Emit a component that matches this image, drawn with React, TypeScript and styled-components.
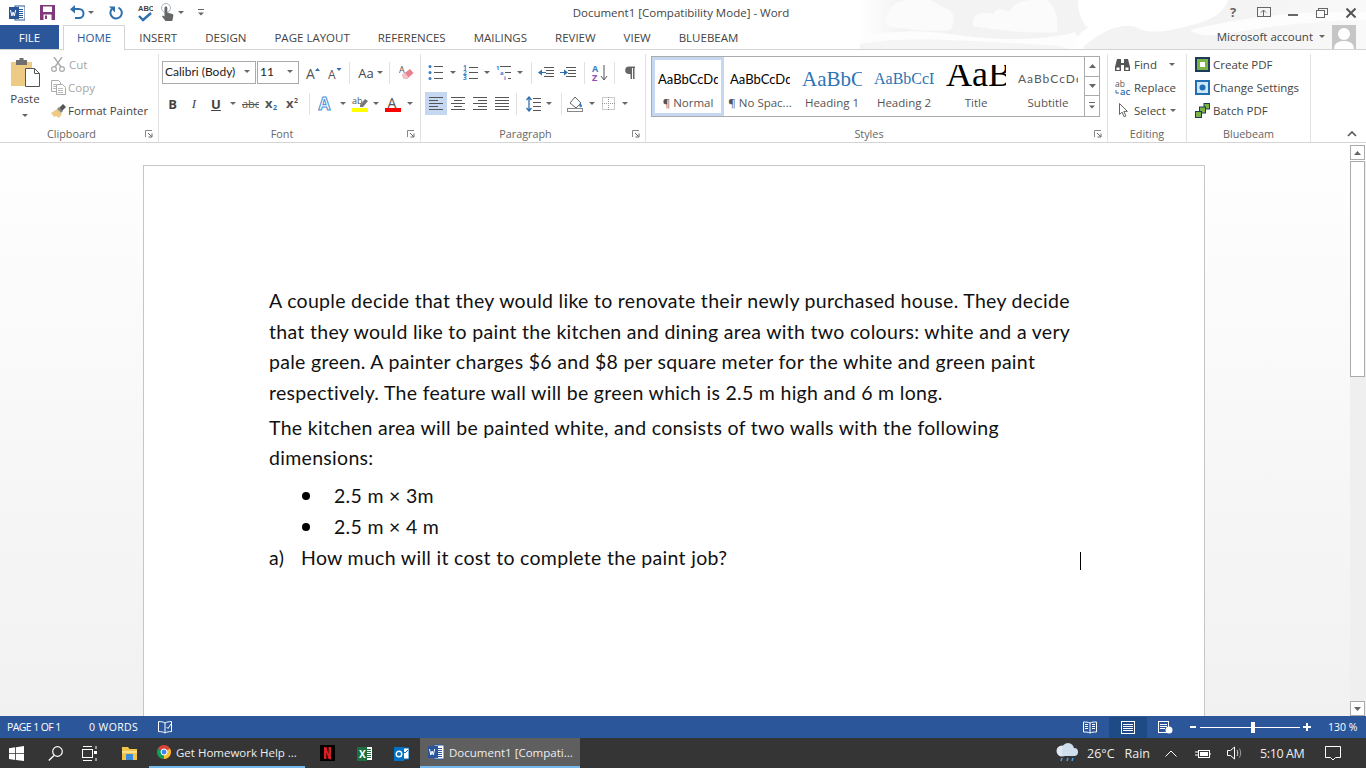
import React from "react";
import styled, { createGlobalStyle } from "styled-components";

const ui = `"Open Sans", "Noto Sans", sans-serif`;

const Global = createGlobalStyle`
  html, body { margin: 0; padding: 0; height: 100%; overflow: hidden; background: #fff; }
  * { box-sizing: border-box; }
`;

const Shell = styled.div`
  width: 1366px;
  height: 768px;
  display: flex;
  flex-direction: column;
  overflow: hidden;
  font-family: ${ui};
  color: #444;
`;

/* ---------- title bar + tabs ---------- */

const Header = styled.header`
  position: relative;
  height: 50px;
  background: #fff;
`;

const Watermark = styled.svg`
  position: absolute;
  right: 0;
  top: 0;
`;

const TitleRow = styled.div`
  position: relative;
  height: 25px;
  display: grid;
  grid-template-columns: 1fr auto 1fr;
  align-items: center;
`;

const Qat = styled.div`
  display: flex;
  align-items: center;
  padding-left: 9px;
  height: 25px;
`;

const QatSlot = styled.div<{ $w: number }>`
  width: ${(p) => p.$w}px;
  display: flex;
  align-items: center;
  justify-content: center;
`;

const DocTitle = styled.div`
  font-size: 11.5px;
  color: #444;
  padding-right: 4px;
`;

const WindowButtons = styled.div`
  display: flex;
  justify-content: flex-end;
  align-items: center;
  padding-right: 1px;
`;

const TabRow = styled.nav`
  position: relative;
  height: 25px;
  display: flex;
  align-items: stretch;
  border-bottom: 1px solid #d4d4d4;
`;

const FileTab = styled.div`
  width: 59px;
  background: #2b579a;
  color: #fff;
  font-size: 11.5px;
  display: flex;
  align-items: center;
  justify-content: center;
  margin-right: 4px;
`;

const Tab = styled.div<{ $active?: boolean }>`
  padding: 0 13px;
  font-size: 11.5px;
  line-height: 23px;
  color: ${(p) => (p.$active ? "#2b579a" : "#444")};
  white-space: nowrap;
  height: ${(p) => (p.$active ? "25px" : "24px")};
  border: 1px solid ${(p) => (p.$active ? "#d4d4d4" : "transparent")};
  border-bottom: none;
  background: ${(p) => (p.$active ? "#fff" : "transparent")};
`;

const Account = styled.div`
  margin-left: auto;
  display: flex;
  align-items: center;
  gap: 6px;
  font-size: 11.5px;
  color: #444;
  padding-bottom: 2px;
`;

const Avatar = styled.div`
  width: 24px;
  height: 24px;
  background: #c6c6c6;
  margin: 0 10px 0 1px;
  align-self: flex-end;
  position: relative;
  top: 2px;
  overflow: hidden;
`;

/* ---------- ribbon ---------- */

const Ribbon = styled.section`
  height: 93px;
  display: flex;
  background: #fff;
  border-bottom: 1px solid #d4d4d4;
  position: relative;
`;

const Group = styled.div<{ $w: number }>`
  width: ${(p) => p.$w}px;
  height: 88px;
  margin-top: 4px;
  display: flex;
  flex-direction: column;
  border-right: 1px solid #e1e1e1;
`;

const GroupBody = styled.div`
  flex: 1;
  min-height: 0;
  display: flex;
`;

const GroupLabel = styled.div<{ $launch?: boolean }>`
  height: 15px;
  position: relative;
  top: -1px;
  font-size: 10.8px;
  line-height: 15px;
  text-align: center;
  color: #666;
  padding-right: ${(p) => (p.$launch ? 15 : 0)}px;
`;

const Launcher = styled.svg`
  position: absolute;
  right: 5px;
  top: 4px;
`;

const Rows = styled.div<{ $pl: number }>`
  display: flex;
  flex-direction: column;
  gap: 8px;
  padding-left: ${(p) => p.$pl}px;
  padding-top: 7px;
`;

const Row = styled.div`
  display: flex;
  align-items: center;
  height: 23px;
`;

const Tool = styled.div<{ $w: number; $on?: boolean; $ml?: number }>`
  width: ${(p) => p.$w}px;
  height: 23px;
  margin-left: ${(p) => p.$ml ?? 0}px;
  display: flex;
  align-items: center;
  justify-content: center;
  background: ${(p) => (p.$on ? "#c5d7f1" : "transparent")};
  font-size: 13px;
  color: #444;
  flex: none;
`;

const Caret = styled.span<{ $ml?: number }>`
  display: inline-block;
  width: 0;
  height: 0;
  margin-left: ${(p) => p.$ml ?? 0}px;
  border-left: 3px solid transparent;
  border-right: 3px solid transparent;
  border-top: 3px solid #666;
  flex: none;
`;

const VSep = styled.div<{ $ml: number; $mr: number }>`
  width: 1px;
  height: 22px;
  background: #e1e1e1;
  margin: 0 ${(p) => p.$mr}px 0 ${(p) => p.$ml}px;
  flex: none;
`;

const Combo = styled.div<{ $w: number }>`
  width: ${(p) => p.$w}px;
  height: 23px;
  border: 1px solid #ababab;
  display: flex;
  align-items: center;
  justify-content: space-between;
  padding: 0 5px 2px 2px;
  font-family: "Lato", sans-serif;
  font-size: 12px;
  color: #222;
  margin-right: 1px;
  flex: none;
`;

const PasteCol = styled.div`
  width: 50px;
  display: flex;
  flex-direction: column;
  align-items: center;
  padding-top: 4px;
  flex: none;
`;

const PasteText = styled.div`
  font-size: 11.5px;
  color: #444;
  line-height: 16px;
  margin-top: 2px;
  margin-bottom: 7px;
`;

const ActionList = styled.div<{ $pl: number }>`
  display: flex;
  flex-direction: column;
  margin-top: -1px;
  padding-left: ${(p) => p.$pl}px;
`;

const Action = styled.div<{ $muted?: boolean; $gap?: number }>`
  height: 23px;
  display: flex;
  align-items: center;
  gap: ${(p) => p.$gap ?? 4}px;
  font-size: 11.5px;
  color: ${(p) => (p.$muted ? "#a6a6a6" : "#444")};
  white-space: nowrap;
`;

const Gallery = styled.div`
  margin: 2px 0 0 5px;
  width: 449px;
  height: 61px;
  border: 1px solid #ababab;
  display: flex;
  flex: none;
`;

const StyleItem = styled.div<{ $on?: boolean }>`
  width: 72px;
  height: 59px;
  border: 3px solid ${(p) => (p.$on ? "#c5d7f1" : "transparent")};
  display: flex;
  flex-direction: column;
  align-items: center;
  overflow: hidden;
  flex: none;
`;

const Preview = styled.div<{ $font?: string; $size: number; $color?: string; $spacing?: number; $lh?: number }>`
  width: 60px;
  height: 28px;
  margin-top: 5px;
  overflow: hidden;
  text-align: left;
  white-space: nowrap;
  font-family: ${(p) => p.$font ?? `"Lato", sans-serif`};
  font-size: ${(p) => p.$size}px;
  letter-spacing: ${(p) => p.$spacing ?? 0}px;
  color: ${(p) => p.$color ?? "#000"};
  line-height: ${(p) => p.$lh ?? 28}px;
  flex: none;
`;

const StyleName = styled.div`
  font-size: 11.5px;
  color: #555;
  line-height: 20px;
  white-space: nowrap;
`;

const GalleryScroll = styled.div`
  margin-left: auto;
  width: 15px;
  display: flex;
  flex-direction: column;
  border-left: 1px solid #ababab;
`;

const GalleryBtn = styled.div`
  height: 20px;
  display: flex;
  align-items: center;
  justify-content: center;
  border-bottom: 1px solid #ababab;
  &:last-child { border-bottom: none; }
`;

const CollapseBtn = styled.svg`
  position: absolute;
  right: 9px;
  bottom: 5px;
`;

/* ---------- document ---------- */

const Workspace = styled.main`
  flex: 1;
  min-height: 0;
  display: flex;
  background: linear-gradient(180deg, #ffffff 0%, #fbfbfb 25%, #f1f1f1 100%);
`;

const Canvas = styled.div`
  flex: 1;
  min-width: 0;
  overflow: hidden;
  padding: 22px 0 0 143px;
`;

const Page = styled.article`
  width: 1062px;
  height: 700px;
  background: #fff;
  border: 1px solid #c6c6c6;
  padding: 120px 0 0 125px;
  font-family: "Lato", sans-serif;
  font-size: 19.5px;
  letter-spacing: 0.3px;
  color: #111;
`;

const Para = styled.div<{ $mb: number }>`
  margin-bottom: ${(p) => p.$mb}px;
`;

const Line = styled.div`
  height: 30.7px;
  line-height: 30.7px;
  white-space: nowrap;
`;

const BulletLine = styled(Line)`
  display: flex;
  padding-left: 33px;
`;

const Dot = styled.span`
  width: 8px;
  height: 8px;
  border-radius: 50%;
  background: #000;
  margin: 11px 24px 0 0;
  flex: none;
`;

const AnswerLine = styled(Line)`
  display: flex;
`;

const Letter = styled.span`
  width: 32px;
  flex: none;
`;

const TextCursor = styled.span`
  width: 1px;
  height: 18px;
  background: #000;
  margin: 9px 0 0 353px;
  flex: none;
`;

const ScrollBar = styled.aside`
  width: 16px;
  display: flex;
  flex-direction: column;
  background: linear-gradient(180deg, #fff 0, #fff 18px, #efefef 18px, #efefef 100%);
  padding-top: 2px;
`;

const ScrollBtn = styled.div`
  width: 15px;
  height: 15px;
  background: #fff;
  border: 1px solid #ababab;
  display: flex;
  align-items: center;
  justify-content: center;
  flex: none;
`;

const ScrollThumb = styled.div`
  width: 15px;
  height: 216px;
  margin-top: 1px;
  background: #fff;
  border: 1px solid #ababab;
  flex: none;
`;

const ScrollGap = styled.div`
  flex: 1;
`;

/* ---------- status bar ---------- */

const StatusBar = styled.footer`
  height: 22px;
  background: #2b579a;
  color: #fff;
  display: flex;
  align-items: center;
  font-size: 10.5px;
  flex: none;
`;

const StatusText = styled.span<{ $w: number; $ml?: number; $ls?: number }>`
  width: ${(p) => p.$w}px;
  margin-left: ${(p) => p.$ml ?? 0}px;
  letter-spacing: ${(p) => p.$ls ?? 0}px;
  white-space: nowrap;
  flex: none;
`;

const ViewBtn = styled.div<{ $on?: boolean; $w: number; $ml?: number }>`
  width: ${(p) => p.$w}px;
  margin-left: ${(p) => p.$ml ?? 0}px;
  height: 21px;
  background: ${(p) => (p.$on ? "#1e4a85" : "transparent")};
  display: flex;
  align-items: center;
  justify-content: center;
  flex: none;
`;

const ZoomMinus = styled.div`
  width: 6px;
  height: 2px;
  background: #fff;
  margin-left: 7px;
  flex: none;
`;

const ZoomTrack = styled.div`
  width: 100px;
  height: 1px;
  background: #fff;
  margin: 0 3px 0 4px;
  position: relative;
  flex: none;
`;

const ZoomThumb = styled.div`
  position: absolute;
  left: 51px;
  top: -5px;
  width: 4px;
  height: 11px;
  background: #fff;
`;

/* ---------- taskbar ---------- */

const Taskbar = styled.div`
  height: 30px;
  background: #353535;
  color: #eee;
  display: flex;
  align-items: stretch;
  font-size: 12.5px;
  flex: none;
`;

const TaskIcon = styled.div<{ $w: number; $ml?: number }>`
  width: ${(p) => p.$w}px;
  margin-left: ${(p) => p.$ml ?? 0}px;
  display: flex;
  align-items: center;
  justify-content: center;
  flex: none;
`;

const TaskApp = styled.div<{ $w: number; $on?: boolean; $ml?: number }>`
  width: ${(p) => p.$w}px;
  margin-left: ${(p) => p.$ml ?? 0}px;
  display: flex;
  align-items: center;
  gap: 5px;
  padding-left: 8px;
  font-size: 11.5px;
  background: ${(p) => (p.$on ? "#5f5f5f" : "transparent")};
  border-bottom: 2px solid #76b9ed;
  white-space: nowrap;
  flex: none;
`;

const TrayText = styled.span<{ $ml: number; $ls?: number }>`
  margin-left: ${(p) => p.$ml}px;
  letter-spacing: ${(p) => p.$ls ?? 0}px;
  align-self: center;
  white-space: nowrap;
  flex: none;
`;

const TrayIcon = styled.div<{ $ml: number }>`
  margin-left: ${(p) => p.$ml}px;
  display: flex;
  align-items: center;
  flex: none;
`;

/* ---------- icons ---------- */

const Glyph = ({ w, h, children }: { w: number; h: number; children: React.ReactNode }) => (
  <svg width={w} height={h} viewBox={`0 0 ${w} ${h}`} style={{ display: "block", flex: "none" }}>
    {children}
  </svg>
);

const Lines = ({ rows, color = "#555" }: { rows: [number, number, number][]; color?: string }) => (
  <>
    {rows.map(([x1, x2, y], i) => (
      <line key={i} x1={x1} x2={x2} y1={y + 0.5} y2={y + 0.5} stroke={color} strokeWidth="1" />
    ))}
  </>
);

const WordIcon = () => (
  <Glyph w={16} h={16}>
    <rect x="6" y="1" width="10" height="14" fill="#fff" stroke="#2b579a" />
    <Lines rows={[[9, 14, 4], [9, 14, 6], [9, 14, 8], [9, 14, 10], [9, 14, 12]]} color="#2b579a" />
    <rect x="0" y="2" width="10" height="12" fill="#2b579a" />
    <path d="M1.5 5l1.4 6 1.2-4 1.2 4 1.4-6" fill="none" stroke="#fff" strokeWidth="1" />
  </Glyph>
);

const SaveIcon = () => (
  <Glyph w={15} h={15}>
    <rect x="0" y="0" width="15" height="15" fill="#80397b" />
    <rect x="3" y="1.5" width="9" height="5.5" fill="#fff" />
    <rect x="3.5" y="9.5" width="8" height="5.5" fill="#fff" />
    <rect x="5" y="10.5" width="2" height="3.5" fill="#80397b" />
  </Glyph>
);

const UndoIcon = () => (
  <Glyph w={16} h={15}>
    <path d="M3 4h7a4.500 4.500 0 0 1 0 9H6" fill="none" stroke="#2f6fae" strokeWidth="2" />
    <path d="M6 0L1 4.200 6 8.500z" fill="#2f6fae" />
  </Glyph>
);

const RedoIcon = () => (
  <Glyph w={14} h={15}>
    <path d="M9.500 2.600A5.700 5.700 0 1 1 2.800 4" fill="none" stroke="#2f6fae" strokeWidth="2" />
    <path d="M0 1.500h6v6z" fill="#2f6fae" />
  </Glyph>
);

const SpellIcon = () => (
  <Glyph w={15} h={18}>
    <text x="0" y="7" fontSize="7.5" fontWeight="700" fontFamily="Liberation Sans" fill="#444">ABC</text>
    <path d="M1 12l4 4 8-7" fill="none" stroke="#2f6fae" strokeWidth="2.400" />
  </Glyph>
);

const TouchIcon = () => (
  <Glyph w={15} h={19}>
    <circle cx="6" cy="5" r="4.500" fill="none" stroke="#aab4c4" strokeWidth="1" />
    <path d="M4.500 5a1.400 1.400 0 0 1 2.800 0v4.500l5 1.500c1 .4 1.200 1 1 2l-1 5H5.500L2 13.500l1-1 1.500 1z" fill="#666" />
  </Glyph>
);

const QatMore = () => (
  <Glyph w={7} h={8}>
    <rect x="0" y="0" width="6" height="1" fill="#666" />
    <path d="M0 3.500h6L3 6.500z" fill="#666" />
  </Glyph>
);

const PasteIcon = () => (
  <Glyph w={30} h={31}>
    <rect x="1" y="4" width="21" height="24" fill="#eecb84" />
    <rect x="6" y="2" width="11" height="5" fill="#6f6f6f" />
    <rect x="9.500" y="0" width="4" height="3" fill="#6f6f6f" />
    <path d="M15.500 10.500h9l5 5v13h-14z" fill="#fff" stroke="#555" />
    <path d="M24.500 10.500v5h5" fill="none" stroke="#555" />
  </Glyph>
);

const CutIcon = () => (
  <Glyph w={14} h={15}>
    <path d="M3 0l7 10M11 0L4 10" stroke="#aaa" strokeWidth="1.400" fill="none" />
    <circle cx="3" cy="12" r="2.400" fill="none" stroke="#aaa" strokeWidth="1.200" />
    <circle cx="11" cy="12" r="2.400" fill="none" stroke="#aaa" strokeWidth="1.200" />
  </Glyph>
);

const CopyIcon = () => (
  <Glyph w={15} h={15}>
    <path d="M0.500 0.500h7l2 2v9h-9z" fill="#fff" stroke="#aaa" />
    <path d="M5.500 4.500h6l3 3v7h-9z" fill="#fff" stroke="#aaa" />
    <Lines rows={[[2, 5, 4], [2, 5, 6], [2, 5, 8], [7, 12, 8], [7, 12, 10], [7, 12, 12]]} color="#bbb" />
  </Glyph>
);

const BrushIcon = () => (
  <Glyph w={15} h={14}>
    <path d="M0 9l6-4 5 5-3 4-3-2-2 1z" fill="#eecb84" />
    <path d="M6 5l2-2 4 4-2 2z" fill="#888" />
    <path d="M8.500 3.500L12 0l3 3-4 4z" fill="#555" />
  </Glyph>
);

const GrowIcon = ({ down }: { down?: boolean }) => (
  <Glyph w={14} h={14}>
    <text x="0" y="13" fontSize={down ? 12 : 14} fontFamily="Open Sans" fill="#555">A</text>
    {down ? <path d="M8.500 2h5l-2.500 3z" fill="#2f6fae" /> : <path d="M9 5h5l-2.500-3z" fill="#2f6fae" />}
  </Glyph>
);

const EraserIcon = () => (
  <Glyph w={15} h={15}>
    <text x="0" y="8" fontSize="9" fontFamily="Open Sans" fill="#555">A</text>
    <path d="M3 10l8-6 3.500 4-6.500 6H5z" fill="#e8818d" />
    <path d="M3 10l3-2 3.500 4L8 14H5z" fill="#f3c0c6" />
  </Glyph>
);

const StrikeIcon = () => (
  <Glyph w={17} h={12}>
    <text x="0" y="10" fontSize="11" fontFamily="Open Sans" fill="#555">abc</text>
    <rect x="0" y="6" width="17" height="1" fill="#555" />
  </Glyph>
);

const ScriptIcon = ({ sup }: { sup?: boolean }) => (
  <Glyph w={14} h={14}>
    <text x="0" y="11" fontSize="13" fontWeight="700" fontFamily="Open Sans" fill="#555">x</text>
    <text x="8" y={sup ? 6 : 13} fontSize="7" fontWeight="700" fontFamily="Open Sans" fill={sup ? "#555" : "#2f6fae"}>2</text>
  </Glyph>
);

const EffectA = () => (
  <Glyph w={16} h={16}>
    <text x="0.500" y="14" fontSize="17" fontWeight="700" fontFamily="Open Sans" fill="#fff" stroke="#4a8fd6" strokeWidth="1">A</text>
  </Glyph>
);

const HighlightIcon = () => (
  <Glyph w={16} h={16}>
    <text x="0" y="8" fontSize="9" fontFamily="Open Sans" fill="#555">ab</text>
    <path d="M8 9l5-6 3 2-5 6H8z" fill="#777" />
    <rect x="0" y="12" width="16" height="4" fill="#ffff00" />
  </Glyph>
);

const ColorA = () => (
  <Glyph w={16} h={16}>
    <text x="2.500" y="11.500" fontSize="14" fontFamily="Open Sans" fill="#555">A</text>
    <rect x="0" y="12" width="16" height="4" fill="#f00" />
  </Glyph>
);

const BulletsIcon = () => (
  <Glyph w={15} h={15}>
    {[1.500, 7.500, 13.500].map((y) => <circle key={y} cx="2" cy={y} r="1.500" fill="#3a7fc4" />)}
    <Lines rows={[[6, 15, 1], [6, 15, 7], [6, 15, 13]]} />
  </Glyph>
);

const NumberIcon = () => (
  <Glyph w={15} h={16}>
    {([["1", 5], ["2", 10], ["3", 15]] as [string, number][]).map(([t, y]) => (
      <text key={t} x="0" y={y} fontSize="6.500" fontWeight="700" fontFamily="Open Sans" fill="#3a7fc4">{t}</text>
    ))}
    <Lines rows={[[6, 15, 2], [6, 15, 7], [6, 15, 13]]} />
  </Glyph>
);

const MultiIcon = () => (
  <Glyph w={15} h={16}>
    <text x="0" y="5" fontSize="6" fontWeight="700" fontFamily="Open Sans" fill="#3a7fc4">1</text>
    <text x="4" y="10" fontSize="6" fontWeight="700" fontFamily="Open Sans" fill="#3a7fc4">a</text>
    <text x="8" y="15" fontSize="6" fontWeight="700" fontFamily="Open Sans" fill="#3a7fc4">i</text>
    <Lines rows={[[4, 15, 1], [9, 15, 7], [12, 15, 13]]} />
  </Glyph>
);

const IndentIcon = ({ grow }: { grow?: boolean }) => (
  <Glyph w={16} h={13}>
    <Lines rows={[[6, 16, 1], [8, 16, 4], [8, 16, 7], [6, 16, 10]]} />
    {grow
      ? <path d="M0 6h4V3.500L8 6.500 4 9.500V7H0z" fill="#2f6fae" />
      : <path d="M8 6H4V3.500L0 6.500l4 3V7h4z" fill="#2f6fae" />}
  </Glyph>
);

const SortIcon = () => (
  <Glyph w={16} h={17}>
    <text x="0" y="7.500" fontSize="9" fontWeight="700" fontFamily="Open Sans" fill="#3a7fc4">A</text>
    <text x="0" y="16.500" fontSize="9" fontWeight="700" fontFamily="Open Sans" fill="#8a4fb8">Z</text>
    <path d="M12 1v14M9 12l3 4 3-4" fill="none" stroke="#555" strokeWidth="1" />
  </Glyph>
);

const Pilcrow = () => (
  <Glyph w={12} h={13}>
    <path d="M11 0.500H5a3.800 3.800 0 0 0 0 7.600h1.500V13H8V2h1v11h1.500V2H11z" fill="#666" />
  </Glyph>
);

const AlignIcon = ({ kind }: { kind: "left" | "center" | "right" | "justify" }) => {
  const rows: Record<string, [number, number, number][]> = {
    left: [[0, 14, 0], [0, 9, 3], [0, 14, 6], [0, 9, 9], [0, 14, 12]],
    center: [[0, 14, 0], [3, 11, 3], [0, 14, 6], [3, 11, 9], [0, 14, 12]],
    right: [[0, 14, 0], [5, 14, 3], [0, 14, 6], [5, 14, 9], [0, 14, 12]],
    justify: [[0, 14, 0], [0, 14, 3], [0, 14, 6], [0, 14, 9], [0, 14, 12]],
  };
  return <Glyph w={14} h={13}><Lines rows={rows[kind]} /></Glyph>;
};

const SpacingIcon = () => (
  <Glyph w={15} h={16}>
    <path d="M3 1v14M0.500 4L3 1l2.500 3M0.500 12L3 15l2.500-3" fill="none" stroke="#2f6fae" strokeWidth="1.300" />
    <Lines rows={[[7, 15, 2], [7, 15, 6], [7, 15, 10], [7, 15, 14]]} />
  </Glyph>
);

const ShadeIcon = () => (
  <Glyph w={16} h={16}>
    <path d="M3 7l5-6 6 6-5 5z" fill="#fff" stroke="#666" />
    <path d="M13 6c1 2 2 3 2 4a1.300 1.300 0 0 1-2.600 0c0-1 .3-2 .6-4z" fill="#3a7fc4" />
    <rect x="0.500" y="12.500" width="15" height="3" fill="#fff" stroke="#888" />
  </Glyph>
);

const BordersIcon = () => (
  <Glyph w={13} h={13}>
    <rect x="0.500" y="0.500" width="12" height="12" fill="none" stroke="#999" strokeDasharray="1 1" />
    <path d="M6.500 0v13M0 6.500h13" stroke="#999" strokeDasharray="1 1" />
  </Glyph>
);

const BinocularIcon = () => (
  <Glyph w={15} h={14}>
    <path d="M2 1h4v4h3V1h4l2 8v4H9V7H6v6H0V9z" fill="#555" />
    <rect x="1.500" y="9.500" width="3" height="2.500" fill="#fff" />
    <rect x="10.500" y="9.500" width="3" height="2.500" fill="#fff" />
  </Glyph>
);

const ReplaceIcon = () => (
  <Glyph w={16} h={15}>
    <text x="0" y="7" fontSize="8.500" fontFamily="Open Sans" fill="#555">ab</text>
    <text x="5" y="14.500" fontSize="9.500" fontWeight="600" fontFamily="Open Sans" fill="#2f6fae">ac</text>
    <path d="M1 10v3h3" fill="none" stroke="#2f6fae" strokeWidth="1" />
  </Glyph>
);

const SelectIcon = () => (
  <Glyph w={15} h={15}>
    <path d="M4.500 0.500v11l2.600-2.400 2 4.700 1.800-.8-2-4.600h3.500z" fill="#fff" stroke="#666" />
  </Glyph>
);

const PdfIcon = () => (
  <Glyph w={15} h={15}>
    <rect x="0" y="0" width="15" height="15" fill="#1c3a5e" />
    <rect x="2" y="2" width="11" height="11" fill="#7cb342" />
    <rect x="5" y="5" width="5" height="5" fill="#fff" />
  </Glyph>
);

const SettingsIcon = () => (
  <Glyph w={15} h={15}>
    <rect x="0" y="0" width="15" height="15" fill="#1f6fb5" />
    <rect x="2" y="2" width="11" height="11" fill="#cfe6f7" />
    <circle cx="7.500" cy="7.500" r="3" fill="#1f6fb5" />
  </Glyph>
);

const BatchIcon = () => (
  <Glyph w={15} h={15}>
    <rect x="9" y="0.500" width="5.500" height="5.500" fill="#7cb342" stroke="#1c3a5e" />
    <rect x="4.500" y="4" width="6" height="6" fill="#7cb342" stroke="#1c3a5e" />
    <rect x="0.500" y="8.500" width="6" height="6" fill="#7cb342" stroke="#1c3a5e" />
  </Glyph>
);

const Launch = () => (
  <Launcher width="8" height="8" viewBox="0 0 8 8">
    <path d="M0.500 7V0.500H7" fill="none" stroke="#888" />
    <path d="M3 3l3.500 3.500M7 3.500V7H3.500" fill="none" stroke="#666" />
  </Launcher>
);

const Tri = ({ up }: { up?: boolean }) => (
  <Glyph w={7} h={4}>
    <path d={up ? "M0 4h7L3.500 0z" : "M0 0h7L3.500 4z"} fill="#666" />
  </Glyph>
);

/* ---------- page ---------- */

const tabs = ["INSERT", "DESIGN", "PAGE LAYOUT", "REFERENCES", "MAILINGS", "REVIEW", "VIEW", "BLUEBEAM"];

const galleryItems: { name: string; size: number; font?: string; color?: string; spacing?: number; lh?: number }[] = [
  { name: "¶ Normal", size: 13 },
  { name: "¶ No Spac...", size: 13 },
  { name: "Heading 1", size: 21, font: `"Liberation Serif", serif`, color: "#2e74b5" },
  { name: "Heading 2", size: 16, font: `"Liberation Serif", serif`, color: "#2e74b5" },
  { name: "Title", size: 36, font: `"Liberation Serif", serif`, lh: 18 },
  { name: "Subtitle", size: 12, color: "#5a5a5a", spacing: 1 },
];

export default function App() {
  return (
    <Shell>
      <Global />
      <Header>
        <Watermark width="506" height="50" viewBox="0 0 506 50">
          <defs>
            <linearGradient id="fade" x1="0" x2="1" y1="0" y2="0">
              <stop offset="0" stopColor="#fff" />
              <stop offset="0.08" stopColor="#f3f3f3" />
              <stop offset="0.72" stopColor="#f3f3f3" />
              <stop offset="1" stopColor="#f9f9f9" />
            </linearGradient>
          </defs>
          <rect width="506" height="50" fill="url(#fade)" />
          <path d="M27 26C24 12 32 0 50 0h20c8 4 14 8 20 10 6 6 4 16 0 20-20 2-40 0-63-4z" fill="#fbfbfb" />
          <path d="M113 26c-2-10 6-16 20-12 4-6 10-6 16-2 4-8 14-12 22-12h16c8 6 12 18 10 32-30 2-60-2-84-6z" fill="#fbfbfb" />
          <path d="M0 38c30-8 60-8 90-4 40 6 90 8 125-2l10 18H0z" fill="#fdfdfd" />
          <path d="M0 44c40-8 100-4 200 2l10 4H0z" fill="#f5f5f5" />
          <path d="M218 0h150c-4 12-14 20-40 26-20 6-40 8-50 2-18-8-44 8-60 24-6-8-2-18 10-24-8-8-10-18-10-28z" fill="#fff" />
          <path d="M330 30c50-12 110-20 176-18v8c-40 0-100 6-140 14-14 2-30 2-36-4z" fill="#fdfdfd" />
        </Watermark>
        <TitleRow>
          <Qat>
            <QatSlot $w={16}><WordIcon /></QatSlot>
            <QatSlot $w={44}><SaveIcon /></QatSlot>
            <QatSlot $w={15}><UndoIcon /></QatSlot>
            <QatSlot $w={14}><Caret /></QatSlot>
            <QatSlot $w={35}><RedoIcon /></QatSlot>
            <QatSlot $w={25}><SpellIcon /></QatSlot>
            <QatSlot $w={19}><TouchIcon /></QatSlot>
            <QatSlot $w={8}><Caret /></QatSlot>
            <QatSlot $w={32}><QatMore /></QatSlot>
          </Qat>
          <DocTitle>Document1 [Compatibility Mode] - Word</DocTitle>
          <WindowButtons>
            <QatSlot $w={29}>
              <Glyph w={11} h={13}>
                <text x="1" y="11" fontSize="13" fontWeight="700" fontFamily="Open Sans" fill="#666">?</text>
              </Glyph>
            </QatSlot>
            <QatSlot $w={29}>
              <Glyph w={14} h={11}>
                <rect x="0.500" y="0.500" width="13" height="9" fill="none" stroke="#666" />
                <path d="M6.500 9V3.500M4 5.500L6.500 3 9 5.500" fill="none" stroke="#666" />
              </Glyph>
            </QatSlot>
            <QatSlot $w={29}>
              <Glyph w={10} h={9}><rect x="0" y="6" width="10" height="2" fill="#666" /></Glyph>
            </QatSlot>
            <QatSlot $w={29}>
              <Glyph w={12} h={10}>
                <rect x="2.500" y="0.500" width="9" height="6" fill="none" stroke="#666" />
                <rect x="0.500" y="2.500" width="8" height="7" fill="#fff" stroke="#666" />
              </Glyph>
            </QatSlot>
            <QatSlot $w={29}>
              <Glyph w={10} h={10}>
                <path d="M0.500 0.500l9 9M9.500 0.500l-9 9" stroke="#555" strokeWidth="2" />
              </Glyph>
            </QatSlot>
          </WindowButtons>
        </TitleRow>
        <TabRow>
          <FileTab>FILE</FileTab>
          <Tab $active>HOME</Tab>
          {tabs.map((t) => <Tab key={t}>{t}</Tab>)}
          <Account>
            Microsoft account
            <Caret />
            <Avatar>
              <Glyph w={24} h={24}>
                <circle cx="12" cy="9" r="6" fill="#fff" />
                <path d="M2 24c0-6 5-8 10-8s10 2 10 8z" fill="#fff" />
              </Glyph>
            </Avatar>
          </Account>
        </TabRow>
      </Header>

      <Ribbon>
        <Group $w={159}>
          <GroupBody>
            <PasteCol>
              <PasteIcon />
              <PasteText>Paste</PasteText>
              <Caret />
            </PasteCol>
            <ActionList $pl={1}>
              <Action $muted><CutIcon /> Cut</Action>
              <Action $muted $gap={2}><CopyIcon /> Copy</Action>
              <Action $gap={2}><BrushIcon /> Format Painter</Action>
            </ActionList>
          </GroupBody>
          <GroupLabel $launch>Clipboard<Launch /></GroupLabel>
        </Group>

        <Group $w={262}>
          <GroupBody>
            <Rows $pl={3}>
              <Row>
                <Combo $w={94}>Calibri (Body)<Caret /></Combo>
                <Combo $w={42}>11<Caret /></Combo>
                <Tool $w={22} $ml={2}><GrowIcon /></Tool>
                <Tool $w={22}><GrowIcon down /></Tool>
                <VSep $ml={3} $mr={7} />
                <Tool $w={18}>Aa</Tool>
                <Caret $ml={2} />
                <VSep $ml={6} $mr={8} />
                <Tool $w={16}><EraserIcon /></Tool>
              </Row>
              <Row>
                <Tool $w={21}><b>B</b></Tool>
                <Tool $w={22}><i style={{ fontFamily: "Liberation Serif" }}>I</i></Tool>
                <Tool $w={22}><u><b>U</b></u></Tool>
                <Tool $w={12}><Caret /></Tool>
                <Tool $w={22}><StrikeIcon /></Tool>
                <Tool $w={21}><ScriptIcon /></Tool>
                <Tool $w={21}><ScriptIcon sup /></Tool>
                <VSep $ml={6} $mr={7} />
                <Tool $w={17}><EffectA /></Tool>
                <Tool $w={17}><Caret /></Tool>
                <Tool $w={17}><HighlightIcon /></Tool>
                <Tool $w={16}><Caret /></Tool>
                <Tool $w={18}><ColorA /></Tool>
                <Tool $w={15}><Caret /></Tool>
              </Row>
            </Rows>
          </GroupBody>
          <GroupLabel $launch>Font<Launch /></GroupLabel>
        </Group>

        <Group $w={225}>
          <GroupBody>
            <Rows $pl={4}>
              <Row>
                <Tool $w={18} $ml={1}><BulletsIcon /></Tool>
                <Tool $w={18}><Caret /></Tool>
                <Tool $w={16}><NumberIcon /></Tool>
                <Tool $w={18}><Caret /></Tool>
                <Tool $w={15}><MultiIcon /></Tool>
                <Tool $w={17}><Caret /></Tool>
                <VSep $ml={3} $mr={5} />
                <Tool $w={18}><IndentIcon /></Tool>
                <Tool $w={20} $ml={3}><IndentIcon grow /></Tool>
                <VSep $ml={6} $mr={6} />
                <Tool $w={18}><SortIcon /></Tool>
                <VSep $ml={5} $mr={6} />
                <Tool $w={18}><Pilcrow /></Tool>
              </Row>
              <Row>
                <Tool $w={22} $on><AlignIcon kind="left" /></Tool>
                <Tool $w={22}><AlignIcon kind="center" /></Tool>
                <Tool $w={22}><AlignIcon kind="right" /></Tool>
                <Tool $w={22}><AlignIcon kind="justify" /></Tool>
                <VSep $ml={3} $mr={8} />
                <Tool $w={17}><SpacingIcon /></Tool>
                <Tool $w={13}><Caret /></Tool>
                <VSep $ml={6} $mr={4} />
                <Tool $w={18}><ShadeIcon /></Tool>
                <Tool $w={16}><Caret /></Tool>
                <Tool $w={17}><BordersIcon /></Tool>
                <Tool $w={15}><Caret /></Tool>
              </Row>
            </Rows>
          </GroupBody>
          <GroupLabel $launch>Paragraph<Launch /></GroupLabel>
        </Group>

        <Group $w={462}>
          <GroupBody>
            <Gallery>
              {galleryItems.map((g, i) => (
                <StyleItem key={g.name} $on={i === 0}>
                  <Preview $font={g.font} $size={g.size} $color={g.color} $spacing={g.spacing} $lh={g.lh}>AaBbCcDd</Preview>
                  <StyleName>{g.name}</StyleName>
                </StyleItem>
              ))}
              <GalleryScroll>
                <GalleryBtn><Tri up /></GalleryBtn>
                <GalleryBtn><Tri /></GalleryBtn>
                <GalleryBtn><QatMore /></GalleryBtn>
              </GalleryScroll>
            </Gallery>
          </GroupBody>
          <GroupLabel $launch>Styles<Launch /></GroupLabel>
        </Group>

        <Group $w={79}>
          <GroupBody>
            <ActionList $pl={7}>
              <Action><BinocularIcon /> Find <Caret $ml={8} /></Action>
              <Action $gap={3}><ReplaceIcon /> Replace</Action>
              <Action><SelectIcon /> Select<Caret /></Action>
            </ActionList>
          </GroupBody>
          <GroupLabel>Editing</GroupLabel>
        </Group>

        <Group $w={124}>
          <GroupBody>
            <ActionList $pl={8}>
              <Action $gap={3}><PdfIcon /> Create PDF</Action>
              <Action $gap={3}><SettingsIcon /> Change Settings</Action>
              <Action $gap={3}><BatchIcon /> Batch PDF</Action>
            </ActionList>
          </GroupBody>
          <GroupLabel>Bluebeam</GroupLabel>
        </Group>

        <CollapseBtn width="10" height="6" viewBox="0 0 10 6">
          <path d="M1 5l4-4 4 4" fill="none" stroke="#555" strokeWidth="1.600" />
        </CollapseBtn>
      </Ribbon>

      <Workspace>
        <Canvas>
          <Page>
            <Para $mb={4}>
              <Line>A couple decide that they would like to renovate their newly purchased house. They decide</Line>
              <Line>that they would like to paint the kitchen and dining area with two colours: white and a very</Line>
              <Line>pale green. A painter charges $6 and $8 per square meter for the white and green paint</Line>
              <Line>respectively. The feature wall will be green which is 2.5 m high and 6 m long.</Line>
            </Para>
            <Para $mb={7}>
              <Line>The kitchen area will be painted white, and consists of two walls with the following</Line>
              <Line>dimensions:</Line>
            </Para>
            <BulletLine><Dot />2.5 m × 3m</BulletLine>
            <BulletLine><Dot />2.5 m × 4 m</BulletLine>
            <AnswerLine>
              <Letter>a)</Letter>
              How much will it cost to complete the paint job?
              <TextCursor />
            </AnswerLine>
          </Page>
        </Canvas>
        <ScrollBar>
          <ScrollBtn><Tri up /></ScrollBtn>
          <ScrollThumb />
          <ScrollGap />
          <ScrollBtn><Tri /></ScrollBtn>
        </ScrollBar>
      </Workspace>

      <StatusBar>
        <StatusText $w={82} $ml={7} $ls={-0.6}>PAGE 1 OF 1</StatusText>
        <StatusText $w={69} $ls={0.4}>0 WORDS</StatusText>
        <Glyph w={14} h={13}>
          <path d="M7 2C5 .8 3 .6 .5 .6v10c2.500 0 4.500.2 6.500 1.400 2-1.200 4-1.400 6.500-1.400V.6C11 .6 9 .8 7 2zM7 2v10" fill="none" stroke="#fff" />
          <path d="M8.500 6l1.500 1.500L13 3" fill="none" stroke="#fff" />
        </Glyph>
        <ViewBtn $w={38} $ml={899}>
          <Glyph w={14} h={13}>
            <path d="M7 2C5 1 3 1 .5 1v10c2.500 0 4.500 0 6.500 1 2-1 4-1 6.500-1V1C11 1 9 1 7 2zM7 2v10" fill="none" stroke="#fff" />
            <Lines rows={[[2, 5, 3], [2, 5, 5], [2, 5, 7], [9, 12, 3], [9, 12, 5], [9, 12, 7]]} color="#fff" />
          </Glyph>
        </ViewBtn>
        <ViewBtn $w={38} $on>
          <Glyph w={14} h={13}>
            <rect x="0.500" y="0.500" width="13" height="12" fill="none" stroke="#fff" />
            <Lines rows={[[2, 12, 3], [2, 12, 5], [2, 12, 7], [2, 12, 9]]} color="#fff" />
          </Glyph>
        </ViewBtn>
        <ViewBtn $w={36}>
          <Glyph w={15} h={13}>
            <rect x="0.500" y="0.500" width="10" height="11" fill="none" stroke="#fff" />
            <Lines rows={[[2, 9, 3], [2, 9, 5], [2, 7, 7]]} color="#fff" />
            <circle cx="11" cy="9" r="3.500" fill="#fff" />
          </Glyph>
        </ViewBtn>
        <ZoomMinus />
        <ZoomTrack><ZoomThumb /></ZoomTrack>
        <Glyph w={8} h={8}><path d="M0 3h3V0h2v3h3v2H5v3H3V5H0z" fill="#fff" /></Glyph>
        <StatusText $w={34} $ml={17}>130 %</StatusText>
      </StatusBar>

      <Taskbar>
        <TaskIcon $w={16} $ml={8}>
          <Glyph w={15} h={15}>
            <path d="M0 2.200l6.200-.9v5.900H0zM7 1.200L15 0v7.200H7zM0 8h6.200v5.900L0 13zM7 8h8v7l-8-1.100z" fill="#fff" />
          </Glyph>
        </TaskIcon>
        <TaskIcon $w={16} $ml={23}>
          <Glyph w={15} h={15}>
            <circle cx="9.500" cy="5.500" r="4.800" fill="none" stroke="#fff" strokeWidth="1.200" />
            <path d="M6 9.500L.8 14.500" stroke="#fff" strokeWidth="1.400" />
          </Glyph>
        </TaskIcon>
        <TaskIcon $w={16} $ml={18}>
          <Glyph w={15} h={15}>
            <rect x="0.500" y="3.500" width="10" height="8" fill="none" stroke="#fff" />
            <path d="M1 0.500h9M1 14.500h9M14 0v3M14 12v3" stroke="#fff" />
            <rect x="12" y="5" width="3" height="3" fill="#fff" />
          </Glyph>
        </TaskIcon>
        <TaskIcon $w={16} $ml={24}>
          <Glyph w={15} h={14}>
            <path d="M0 1h6l1.500 2H15v11H0z" fill="#f3c44b" />
            <rect x="0" y="5" width="15" height="2" fill="#fbe08c" />
            <rect x="4" y="8" width="7" height="6" fill="#3a8ed8" />
          </Glyph>
        </TaskIcon>
        <TaskApp $w={156} $ml={12}>
          <Glyph w={14} h={14}>
            <circle cx="7" cy="7" r="7" fill="#db4437" />
            <path d="M7 7L13 3.500A7 7 0 0 1 7 14z" fill="#fbc02d" />
            <path d="M7 7L7 14A7 7 0 0 1 1 3.500z" fill="#0f9d58" />
            <circle cx="7" cy="7" r="3" fill="#4285f4" stroke="#fff" />
          </Glyph>
          Get Homework Help ...
        </TaskApp>
        <TaskIcon $w={15} $ml={15}>
          <Glyph w={15} h={16}>
            <rect width="15" height="16" fill="#000" />
            <path d="M4 2h2.500l2 7V2H11v12.500l-2.500-.4-2-6.600v6.300L4 14z" fill="#d81f26" />
          </Glyph>
        </TaskIcon>
        <TaskIcon $w={15} $ml={22}>
          <Glyph w={15} h={15}>
            <rect x="5" y="1" width="10" height="13" fill="#fff" />
            <Lines rows={[[9, 14, 3], [9, 14, 5], [9, 14, 7], [9, 14, 9], [9, 14, 11]]} color="#1d6f42" />
            <rect x="0" y="1" width="10" height="14" fill="#1d6f42" />
            <text x="2" y="12" fontSize="10" fontWeight="700" fontFamily="Open Sans" fill="#fff">X</text>
          </Glyph>
        </TaskIcon>
        <TaskIcon $w={15} $ml={22}>
          <Glyph w={15} h={15}>
            <rect x="5" y="2" width="10" height="11" fill="#fff" stroke="#0072c6" />
            <path d="M8 4l3 3 3-3" fill="none" stroke="#0072c6" />
            <rect x="0" y="1" width="10" height="14" fill="#0072c6" />
            <circle cx="5" cy="8" r="2.800" fill="none" stroke="#fff" strokeWidth="1.400" />
          </Glyph>
        </TaskIcon>
        <TaskApp $w={160} $ml={11} $on>
          <WordIcon />
          Document1 [Compati...
        </TaskApp>
        <TrayIcon $ml={476}>
          <Glyph w={22} h={20}>
            <circle cx="6" cy="8" r="5.500" fill="#dfe9f3" />
            <circle cx="12" cy="6" r="6" fill="#cfdfee" />
            <circle cx="18" cy="9" r="4" fill="#cfdfee" />
            <rect x="6" y="8" width="13" height="5" fill="#cfdfee" />
            <path d="M6 15l-1 3M12 15l-1 3M17 15l-1 3" stroke="#4a9ce0" strokeWidth="1.600" />
          </Glyph>
        </TrayIcon>
        <TrayText $ml={9}>26°C</TrayText>
        <TrayText $ml={10}>Rain</TrayText>
        <TrayIcon $ml={15}>
          <Glyph w={12} h={7}><path d="M0.500 6.500L6 1l5.500 5.500" fill="none" stroke="#fff" /></Glyph>
        </TrayIcon>
        <TrayIcon $ml={18}>
          <Glyph w={16} h={11}>
            <rect x="3.500" y="2.500" width="11" height="7" fill="none" stroke="#fff" />
            <rect x="5" y="4" width="8" height="4" fill="#fff" />
            <path d="M0 4h3M0 7h3M15 5v2" stroke="#fff" />
          </Glyph>
        </TrayIcon>
        <TrayIcon $ml={16}>
          <Glyph w={16} h={14}>
            <path d="M0.500 4.500h3l4-3.500v12l-4-3.500h-3z" fill="none" stroke="#fff" />
            <path d="M10 4c1 2 1 4 0 6" fill="none" stroke="#ddd" />
            <path d="M12.500 2.500c1.500 3 1.500 6 0 9" fill="none" stroke="#999" />
          </Glyph>
        </TrayIcon>
        <TrayText $ml={17} $ls={-0.4}>5:10 AM</TrayText>
        <TrayIcon $ml={21}>
          <Glyph w={16} h={16}>
            <path d="M0.500 1.500h15v11h-5l-2.500 2.500-2.500-2.500h-5z" fill="none" stroke="#fff" />
          </Glyph>
        </TrayIcon>
      </Taskbar>
    </Shell>
  );
}
